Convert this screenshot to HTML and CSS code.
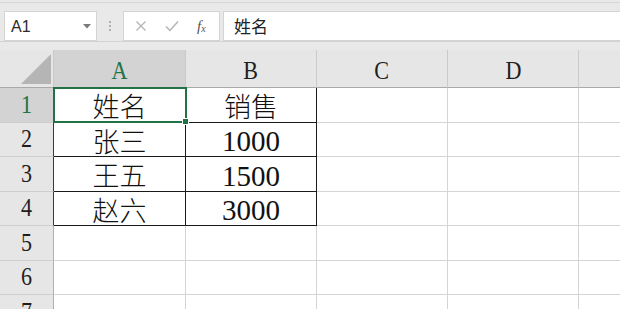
FILE: index.html
```html
<!DOCTYPE html>
<html>
<head>
<meta charset="utf-8">
<link rel="stylesheet" href="styles.css">
</head>
<body>
<div class="topline"></div>
<div class="fbar">
  <div class="namebox">
    <span class="nb-text">A1</span>
    <svg class="caret" width="8" height="5" viewBox="0 0 8 5"><polygon points="0,0 8,0 4,4.5" fill="#7a7a7a"/></svg>
  </div>
  <div class="dots"><i></i><i></i><i></i></div>
  <div class="fxbox">
    <svg class="ico" width="12" height="12" viewBox="0 0 12 12"><path d="M1.5 1.5 L10.5 10.5 M10.5 1.5 L1.5 10.5" stroke="#b4b4b4" stroke-width="1.3" fill="none"/></svg>
    <svg class="ico" width="14" height="12" viewBox="0 0 14 12"><path d="M1 6.5 L5 10.5 L13 1.5" stroke="#b4b4b4" stroke-width="1.5" fill="none"/></svg>
    <span class="fx">f<sub>x</sub></span>
  </div>
  <div class="finput">姓名</div>
</div>
<div class="gap"></div>
<div class="sheet">
  <div class="corner"><svg width="53" height="37" viewBox="0 0 53 37"><polygon points="51,4 51,34 21,34" fill="#b5b5b5"/></svg></div>
  <div class="ch sel"><span>A</span></div>
  <div class="ch"><span>B</span></div>
  <div class="ch"><span>C</span></div>
  <div class="ch"><span>D</span></div>
  <div class="ch last"></div>

  <div class="rh sel dk"><span>1</span></div>
  <div class="c ba cjk">姓名</div><div class="c bb cjk">销售</div><div class="c"></div><div class="c"></div><div class="c last"></div>

  <div class="rh dk"><span>2</span></div>
  <div class="c ba cjk">张三</div><div class="c bb num">1000</div><div class="c"></div><div class="c"></div><div class="c last"></div>

  <div class="rh dk"><span>3</span></div>
  <div class="c ba cjk">王五</div><div class="c bb num">1500</div><div class="c"></div><div class="c"></div><div class="c last"></div>

  <div class="rh dk"><span>4</span></div>
  <div class="c ba cjk">赵六</div><div class="c bb num">3000</div><div class="c"></div><div class="c"></div><div class="c last"></div>

  <div class="rh"><span>5</span></div>
  <div class="c"></div><div class="c"></div><div class="c"></div><div class="c"></div><div class="c last"></div>

  <div class="rh"><span>6</span></div>
  <div class="c"></div><div class="c"></div><div class="c"></div><div class="c"></div><div class="c last"></div>

  <div class="rh"><span>7</span></div>
  <div class="c"></div><div class="c"></div><div class="c"></div><div class="c"></div><div class="c last"></div>

  <div class="selbox"><div class="handle"></div></div>
</div>
</body>
</html>
```
FILE: styles.css
```css
html, body {
  margin: 0;
  padding: 0;
  width: 620px;
  height: 309px;
  overflow: hidden;
  background: #e9e9e9;
  font-family: "Liberation Sans", "Noto Sans CJK SC", sans-serif;
}
.topline {
  height: 2px;
  border-bottom: 1px solid #d7d7d7;
}
.fbar {
  display: flex;
  align-items: flex-start;
  padding: 8px 0 0 4px;
  height: 30px;
  border-bottom: 1px solid #d2d2d2;
}
.namebox {
  height: 28px;
  background: #fff;
  border: 1px solid #d4d4d4;
  display: flex;
  align-items: center;
  justify-content: space-between;
  padding: 0 5px 0 6px;
  box-sizing: content-box;
  width: 80px;
}
.nb-text {
  font-size: 16px;
  color: #2b2b2b;
  padding-top: 1px;
}
.dots {
  width: 26px;
  height: 30px;
  display: flex;
  flex-direction: column;
  align-items: center;
  justify-content: center;
  gap: 2px;
}
.dots i {
  display: block;
  width: 2px;
  height: 2px;
  background: #b0b0b0;
}
.fxbox {
  height: 28px;
  background: #fff;
  border: 1px solid #d4d4d4;
  display: flex;
  align-items: center;
  padding-left: 11px;
  box-sizing: content-box;
  width: 84px;
}
.fxbox .ico { margin-right: 18px; }
.fx {
  font-family: "Liberation Serif", serif;
  font-style: italic;
  font-size: 15px;
  color: #555;
  line-height: 1;
}
.fx sub {
  font-size: 10px;
  vertical-align: -1px;
}
.finput {
  margin-left: 3px;
  flex: 1;
  height: 28px;
  background: #fff;
  border: 1px solid #d4d4d4;
  border-right: none;
  font-family: "Noto Sans CJK SC", sans-serif;
  font-size: 17px;
  line-height: 28px;
  padding-left: 10px;
  color: #222;
}
.gap { height: 8px; }
.sheet {
  position: relative;
  display: grid;
  grid-template-columns: 54px 132px 131px 131px 131px 41px;
  grid-template-rows: 38px 35px 34px 35px 34px 35px 34px 35px;
  background: #fff;
}
.sheet > div { box-sizing: border-box; }
.corner {
  background: #e6e6e6;
  border-right: 1px solid #c9c9c9;
  border-bottom: 1px solid #a9a9a9;
}
.corner svg { display: block; }
.ch {
  background: #e6e6e6;
  border-right: 1px solid #cacaca;
  border-bottom: 1px solid #a9a9a9;
  display: flex;
  align-items: flex-end;
  justify-content: center;
  font-family: "Liberation Serif", serif;
  font-size: 26px;
  color: #1e1e1e;
  padding-bottom: 3px;
  line-height: 1;
}
.ch span, .rh span { display: inline-block; transform: scaleX(0.85); }
.ch.sel { background: #d3d3d3; color: #217346; }
.ch.last { border-right: none; }
.rh {
  background: #e6e6e6;
  border-right: 1px solid #b0b0b0;
  border-bottom: 1px solid #cecece;
  display: flex;
  align-items: flex-end;
  justify-content: center;
  font-family: "Liberation Serif", serif;
  font-size: 26px;
  color: #1e1e1e;
  padding-bottom: 4px;
  line-height: 1;
}
.rh.dk { border-right-color: #3a3a3a; }
.rh.sel { background: #d3d3d3; color: #217346; }
.c {
  border-right: 1px solid #d4d4d4;
  border-bottom: 1px solid #d4d4d4;
  display: flex;
  align-items: center;
  justify-content: center;
  color: #111;
}
.c.cjk {
  font-family: "Noto Sans CJK SC", sans-serif;
  font-weight: 300;
  font-size: 27px;
  line-height: 30px;
  padding-top: 2px;
}
.c.num {
  font-family: "Liberation Serif", serif;
  font-size: 29px;
  line-height: 30px;
  padding-top: 3px;
}
.c.ba, .c.bb { border-right-color: #1a1a1a; border-bottom-color: #1a1a1a; }
.c.last { border-right: none; }
.selbox {
  position: absolute;
  left: 53px;
  top: 37px;
  width: 134px;
  height: 36px;
  border: 2px solid #217346;
  box-sizing: border-box;
}
.handle {
  position: absolute;
  right: -4px;
  bottom: -4px;
  width: 5px;
  height: 5px;
  background: #217346;
  border: 1px solid #fff;
}
```
